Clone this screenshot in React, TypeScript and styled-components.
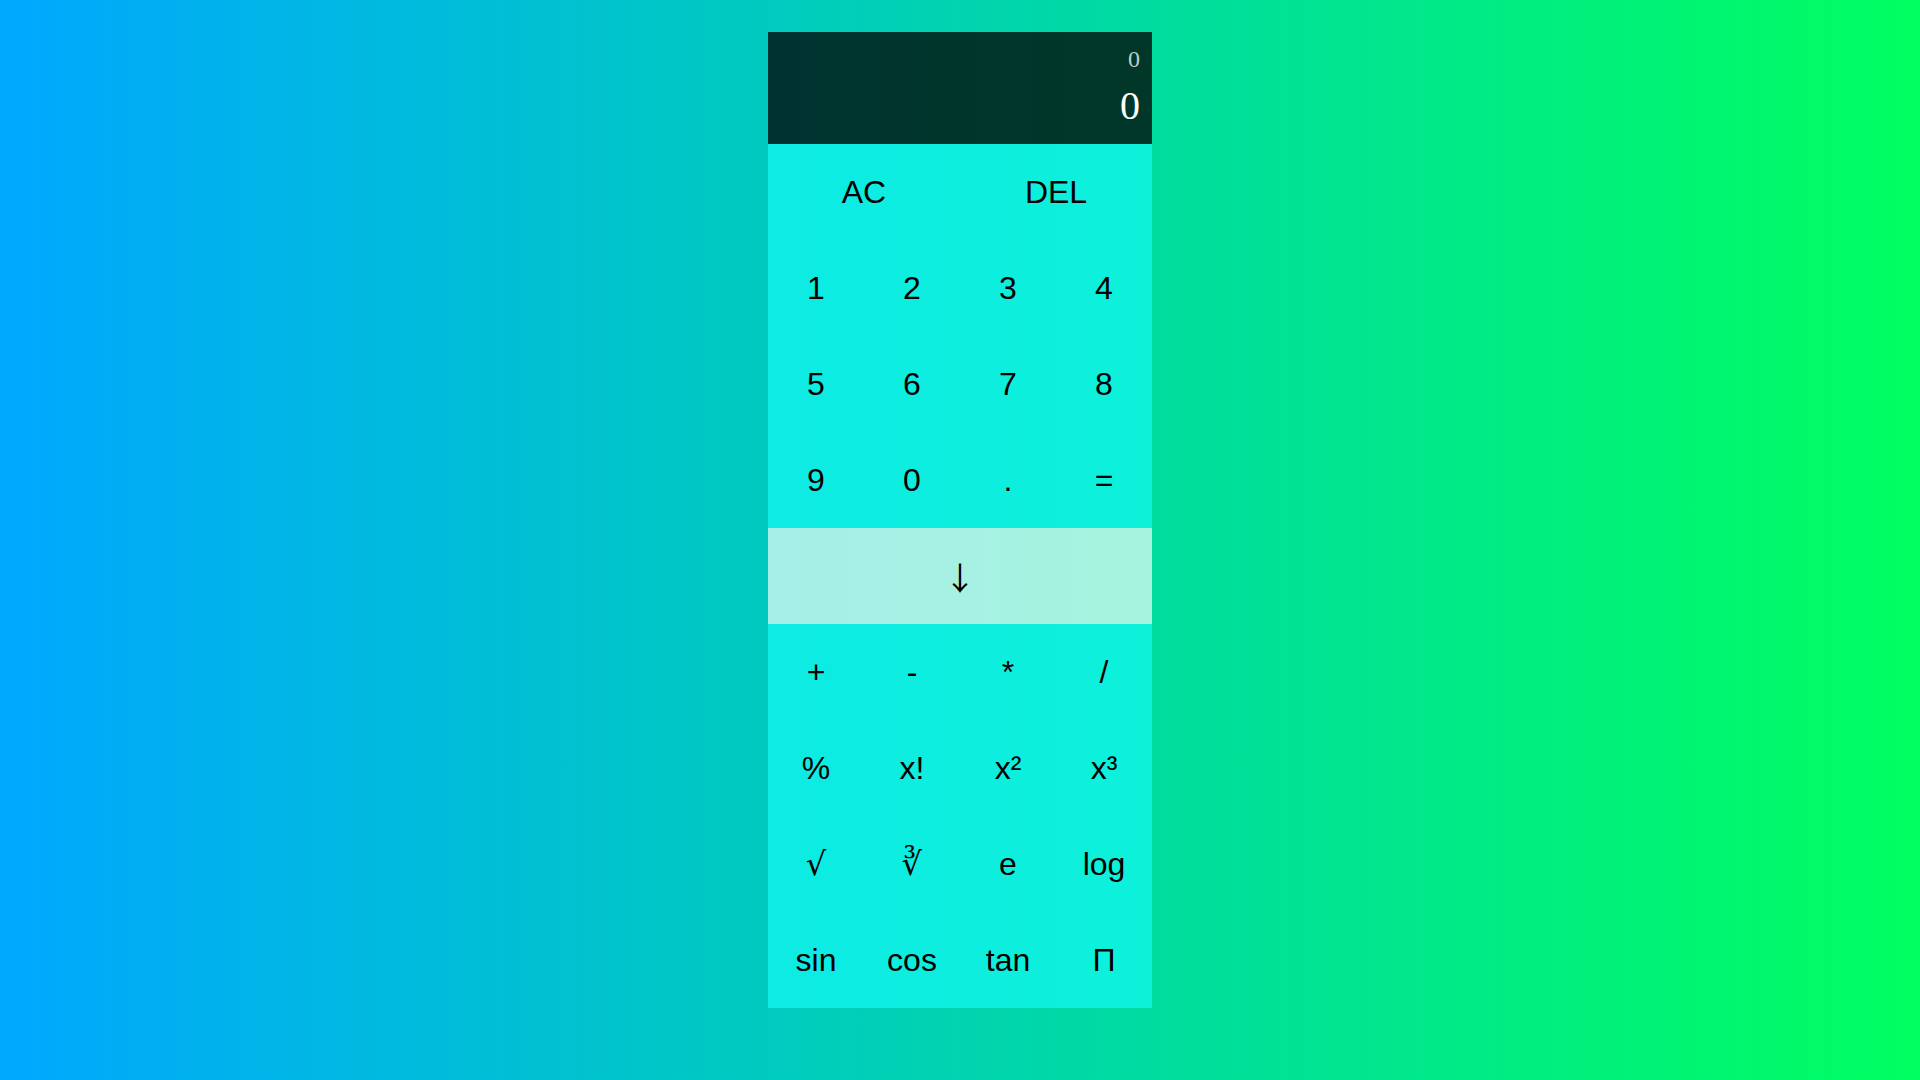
import React from "react";
import styled, { createGlobalStyle } from "styled-components";

const GlobalStyle = createGlobalStyle`
  *, *::before, *::after { box-sizing: border-box; }
  html, body { margin: 0; padding: 0; }
  body {
    min-height: 100vh;
    background: linear-gradient(to right, #00a8ff, #00ff60);
    font-family: "Liberation Sans", Arial, sans-serif;
  }
`;

const Page = styled.main`
  min-height: 100vh;
  display: flex;
  justify-content: center;
  align-items: flex-start;
  padding-top: 32px;
`;

const Grid = styled.div`
  display: grid;
  grid-template-columns: repeat(4, 96px);
  grid-template-rows: 112px repeat(9, 96px);
`;

const Output = styled.div`
  grid-column: 1 / -1;
  background-color: rgba(0, 0, 0, 0.75);
  display: flex;
  flex-direction: column;
  align-items: flex-end;
  justify-content: space-around;
  padding: 10px 12px 11px 10px;
  word-wrap: break-word;
  word-break: break-all;
  font-family: "Liberation Serif", "Times New Roman", serif;
`;

const Previous = styled.div`
  color: rgba(255, 255, 255, 0.75);
  font-size: 24px;
`;

const Current = styled.div`
  color: #ffffff;
  font-size: 40px;
`;

const fonts = {
  sans: '"Liberation Sans", Arial, sans-serif',
  cjk: '"Noto Sans CJK JP", "Liberation Sans", sans-serif',
  serif: '"DejaVu Serif", "Liberation Serif", serif',
};

type FontKind = keyof typeof fonts;

const Key = styled.button<{ $span?: number; $alt?: boolean; $font?: FontKind }>`
  grid-column: span ${(p) => p.$span ?? 1};
  border: none;
  outline: none;
  margin: 0;
  padding: 0;
  cursor: pointer;
  font-family: ${(p) => fonts[p.$font ?? "sans"]};
  font-size: 32px;
  color: #000000;
  background-color: ${(p) =>
    p.$alt ? "rgba(237, 253, 249, 0.7)" : "rgba(20, 250, 246, 0.67)"};
  display: flex;
  align-items: center;
  justify-content: center;
`;

const rows: string[][] = [
  ["1", "2", "3", "4"],
  ["5", "6", "7", "8"],
  ["9", "0", ".", "="],
];

const rows2: string[][] = [
  ["+", "-", "*", "/"],
  ["%", "x!", "x²", "x³"],
  ["√", "∛", "e", "log"],
  ["sin", "cos", "tan", "Π"],
];

const keyFont: Record<string, FontKind> = { "√": "serif", "∛": "serif" };

export default function App() {
  return (
    <>
      <GlobalStyle />
      <Page>
        <Grid>
          <Output>
            <Previous>0</Previous>
            <Current>0</Current>
          </Output>
          <Key $span={2}>AC</Key>
          <Key $span={2}>DEL</Key>
          {rows.flat().map((k, i) => (
            <Key key={"a" + i}>{k}</Key>
          ))}
          <Key $span={4} $alt $font="cjk">
            ↓
          </Key>
          {rows2.flat().map((k, i) => (
            <Key key={"b" + i} $font={keyFont[k]}>
              {k}
            </Key>
          ))}
        </Grid>
      </Page>
    </>
  );
}
